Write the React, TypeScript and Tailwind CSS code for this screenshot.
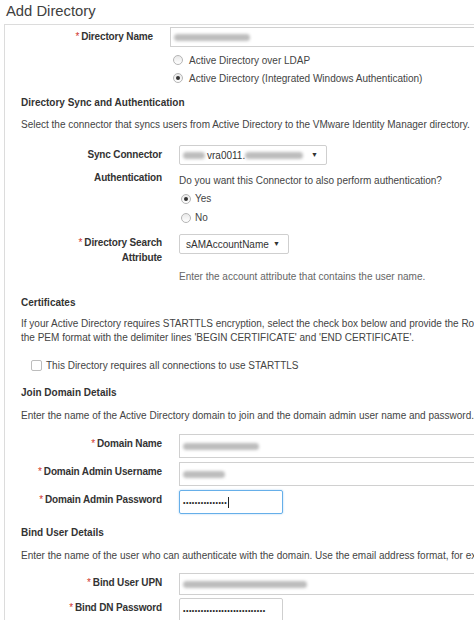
import React from "react";

const font = { fontFamily: '"Liberation Sans", Arial, sans-serif' };

function Req() {
  return <span className="text-[#d0342c] font-normal mr-[2px]">*</span>;
}

function Blur({ w, ml = 0 }: { w: number; ml?: number }) {
  return (
    <span
      className="inline-block h-[7px] rounded-sm bg-[#bdbdbd] blur-[1.5px]"
      style={{ width: w, marginLeft: ml }}
    />
  );
}

function Radio({ checked }: { checked?: boolean }) {
  return (
    <span className="inline-flex h-[10px] w-[10px] items-center justify-center rounded-full border border-[#b5b5b5] bg-gradient-to-b from-[#e9e9e9] to-white">
      {checked && <span className="h-[4px] w-[4px] rounded-full bg-[#333]" />}
    </span>
  );
}

function Label({ children, two, top = 3 }: { children: React.ReactNode; two?: boolean; top?: number }) {
  return (
    <div
      className={`w-[157px] shrink-0 text-right text-[10px] font-bold tracking-[-0.15px] text-[#333] ${two ? "leading-[15px]" : "leading-[14px]"}`}
      style={{ paddingTop: top }}
    >
      {children}
    </div>
  );
}

function Dots({ n }: { n: number }) {
  return (
    <span className="text-[7px] leading-none tracking-[0.5px] text-[#222]">
      {"•".repeat(n)}
    </span>
  );
}

export default function App() {
  return (
    <div className="h-[620px] w-[474px] overflow-hidden bg-white text-[10px] text-[#444]" style={font}>
      {/* TITLE */}
      <div className="h-[24px] pl-[6px] text-[14.8px] leading-[22px] text-[#404040]">Add Directory</div>

      {/* PANEL */}
      <div className="ml-[4px] border-l border-t border-[#dcdcdc] pt-[2px]">
        {/* directory name */}
        <div className="flex h-[20px]">
          <div className="w-[148px] shrink-0 pt-[3px] text-right text-[10px] font-bold tracking-[-0.15px] leading-[14px] text-[#333]">
            <Req />Directory Name
          </div>
          <div className="ml-[17px] flex h-[20px] flex-1 items-center border border-r-0 border-[#d0d0d0] pl-[3px]">
            <Blur w={76} />
          </div>
        </div>

        <div className="mt-[4px] flex h-[18px] items-center gap-[6px] pl-[168px]">
          <Radio />
          <span>Active Directory over LDAP</span>
        </div>
        <div className="flex h-[18px] items-center gap-[6px] pl-[168px]">
          <Radio checked />
          <span>Active Directory (Integrated Windows Authentication)</span>
        </div>

        {/* sync section */}
        <div className="mt-[5px] flex h-[20px] items-center pl-[16px] font-bold text-[#333]">
          Directory Sync and Authentication
        </div>
        <div className="mt-[2px] flex h-[20px] items-center whitespace-nowrap pl-[16px]">
          Select the connector that syncs users from Active Directory to the VMware Identity Manager directory.
        </div>

        <div className="mt-[11px] flex h-[20px]">
          <Label>Sync Connector</Label>
          <div className="ml-[17px] flex h-[20px] w-[148px] items-center rounded-[2px] border border-[#cfcfcf] pl-[3px] text-[#333]">
            <Blur w={22} />
            <span className="ml-[2px]">vra0011.</span>
            <Blur w={58} />
            <span className="ml-auto mr-[8px] text-[7px]">▼</span>
          </div>
        </div>

        <div className="mt-[6px] flex">
          <Label top={0}>Authentication</Label>
          <div className="ml-[17px]">
            <div className="mt-[3px] h-[14px] leading-[14px] text-[#444]">Do you want this Connector to also perform authentication?</div>
            <div className="mt-[1px] flex h-[19px] items-center gap-[4px] pl-[2px]">
              <Radio checked />
              <span>Yes</span>
            </div>
            <div className="flex h-[19px] items-center gap-[4px] pl-[2px]">
              <Radio />
              <span>No</span>
            </div>
          </div>
        </div>

        <div className="mt-[7px] flex h-[32px]">
          <Label two top={1}>
            <Req />Directory Search
            <br />
            Attribute
          </Label>
          <div className="ml-[17px] flex h-[20px] w-[110px] items-center rounded-[2px] border border-[#cfcfcf] pl-[6px] text-[#333]">
            sAMAccountName
            <span className="ml-auto mr-[8px] text-[7px]">▼</span>
          </div>
        </div>
        <div className="mt-[2px] flex h-[16px] items-center pl-[174px] text-[#666]">
          Enter the account attribute that contains the user name.
        </div>

        {/* certificates */}
        <div className="mt-[8px] flex h-[20px] items-center pl-[16px] font-bold text-[#333]">Certificates</div>
        <div className="mt-[5px] overflow-hidden whitespace-nowrap pl-[16px] leading-[14px]">
          If your Active Directory requires STARTTLS encryption, select the check box below and provide the Root CA certificate in
          <br />
          the PEM format with the delimiter lines &apos;BEGIN CERTIFICATE&apos; and &apos;END CERTIFICATE&apos;.
        </div>
        <div className="mt-[12px] flex h-[16px] items-center gap-[4px] pl-[26px]">
          <span className="h-[11px] w-[11px] rounded-[2px] border border-[#bdbdbd] bg-white" />
          <span>This Directory requires all connections to use STARTTLS</span>
        </div>

        {/* join domain */}
        <div className="mt-[9px] flex h-[20px] items-center pl-[16px] font-bold text-[#333]">Join Domain Details</div>
        <div className="mt-[3px] flex h-[20px] items-center whitespace-nowrap pl-[16px]">
          Enter the name of the Active Directory domain to join and the domain admin user name and password.
        </div>

        <div className="mt-[9px] flex h-[24px]">
          <Label>
            <Req />Domain Name
          </Label>
          <div className="ml-[17px] flex h-[24px] flex-1 items-center border border-r-0 border-[#d0d0d0] pl-[3px]">
            <Blur w={76} />
          </div>
        </div>
        <div className="mt-[4px] flex h-[24px]">
          <Label>
            <Req />Domain Admin Username
          </Label>
          <div className="ml-[17px] flex h-[24px] flex-1 items-center border border-r-0 border-[#d0d0d0] pl-[3px]">
            <Blur w={42} />
          </div>
        </div>
        <div className="mt-[4px] flex h-[24px]">
          <Label>
            <Req />Domain Admin Password
          </Label>
          <div className="ml-[17px] flex h-[24px] w-[104px] items-center rounded-[2px] border border-[#66afe9] pl-[3px] shadow-[0_0_2px_rgba(102,175,233,0.6)]">
            <Dots n={15} />
            <span className="ml-[1px] h-[11px] w-px bg-[#222]" />
          </div>
        </div>

        {/* bind user */}
        <div className="mt-[8px] flex h-[20px] items-center pl-[16px] font-bold text-[#333]">Bind User Details</div>
        <div className="mt-[3px] flex h-[20px] items-center overflow-hidden whitespace-nowrap pl-[16px]">
          Enter the name of the user who can authenticate with the domain. Use the email address format, for example
        </div>

        <div className="mt-[8px] flex h-[22px]">
          <Label>
            <Req />Bind User UPN
          </Label>
          <div className="ml-[17px] flex h-[22px] flex-1 items-center border border-r-0 border-[#d0d0d0] pl-[3px]">
            <Blur w={124} />
          </div>
        </div>
        <div className="mt-[3px] flex h-[24px]">
          <Label>
            <Req />Bind DN Password
          </Label>
          <div className="ml-[17px] flex h-[24px] w-[104px] items-center rounded-[2px] border border-[#cfcfcf] pl-[3px]">
            <Dots n={28} />
          </div>
        </div>
      </div>
    </div>
  );
}
